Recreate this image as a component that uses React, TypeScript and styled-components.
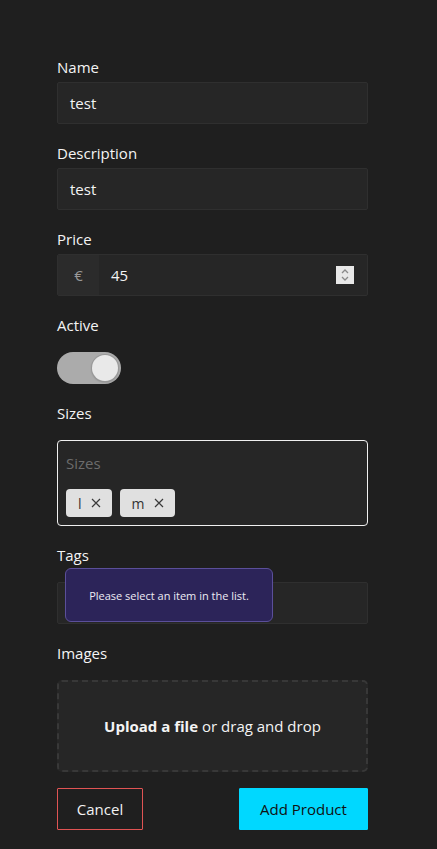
import React from "react";
import styled, { createGlobalStyle } from "styled-components";

const Global = createGlobalStyle`
  html, body { margin: 0; padding: 0; background: #1f1f1f; }
  body { font-family: "Open Sans", "Noto Sans", sans-serif; color: #f2f2f2; }
  * { box-sizing: border-box; }
`;

const Page = styled.div`
  min-height: 849px;
  padding: 56px 69px 19px 57px;
  display: flex;
  flex-direction: column;
  gap: 18px;
`;

const Field = styled.div`
  position: relative;
  display: flex;
  flex-direction: column;
`;

const Label = styled.label<{ $gap: number }>`
  font-size: 15px;
  line-height: 22px;
  color: #f4f4f4;
  margin-bottom: ${(p) => p.$gap}px;
`;

const TextBox = styled.div`
  height: 42px;
  background: #262626;
  border: 1px solid #2f2f2f;
  border-radius: 2px;
  display: flex;
  align-items: center;
  font-size: 15px;
  color: #f4f4f4;
  overflow: hidden;
`;

const Value = styled.span`
  flex: 1;
  padding-left: 12px;
`;

const Prefix = styled.span`
  width: 41px;
  align-self: stretch;
  display: flex;
  align-items: center;
  justify-content: center;
  background: #2b2b2b;
  color: #9a9a9a;
  font-size: 15px;
`;

const Spinner = styled.span`
  width: 18px;
  height: 18px;
  margin-right: 13px;
  background: #e8e8e8;
  display: flex;
  align-items: center;
  justify-content: center;
`;

const Toggle = styled.div`
  width: 64px;
  height: 32px;
  border-radius: 16px;
  background: #ababab;
  display: flex;
  align-items: center;
  justify-content: flex-end;
  padding-right: 3px;
`;

const Knob = styled.span`
  width: 26px;
  height: 26px;
  border-radius: 50%;
  background: #e9e9e9;
  box-shadow: 0 0 0 1px #999, 0 1px 2px rgba(0, 0, 0, 0.3);
`;

const MultiBox = styled.div`
  height: 86px;
  border: 1px solid #f0f0f0;
  border-radius: 4px;
  background: #262626;
  padding: 10px 8px 8px;
  display: flex;
  flex-direction: column;
  gap: 14px;
`;

const Placeholder = styled.span`
  font-size: 15px;
  line-height: 24px;
  color: #6c6c6c;
`;

const Chips = styled.div`
  display: flex;
  gap: 8px;
`;

const Chip = styled.span`
  height: 28px;
  padding: 0 11px 0 12px;
  display: flex;
  align-items: center;
  gap: 9px;
  background: #e0e0e0;
  border-radius: 4px;
  color: #333;
  font-size: 14px;
`;

const Tooltip = styled.div`
  position: absolute;
  left: 8px;
  top: 24px;
  width: 208px;
  height: 54px;
  border-radius: 6px;
  background: #2c2459;
  border: 1px solid #5b4f9a;
  display: flex;
  align-items: center;
  justify-content: center;
  font-size: 11px;
  color: #ececf4;
`;

const Drop = styled.div`
  height: 92px;
  border: 2px dashed #383838;
  border-radius: 5px;
  background: #262626;
  display: flex;
  align-items: center;
  justify-content: center;
  font-size: 15px;
  color: #f4f4f4;
`;

const Strong = styled.strong`
  font-weight: 700;
  margin-right: 4px;
`;

const Actions = styled.div`
  display: flex;
  justify-content: space-between;
  margin-top: -2px;
`;

const Button = styled.button<{ $primary?: boolean }>`
  height: 42px;
  padding: 0;
  font-family: inherit;
  font-size: 15px;
  border-radius: 1px;
  border: 1px solid ${(p) => (p.$primary ? "#00d8ff" : "#e05454")};
  background: ${(p) => (p.$primary ? "#00d8ff" : "transparent")};
  color: ${(p) => (p.$primary ? "#111" : "#f2f2f2")};
  width: ${(p) => (p.$primary ? 129 : 86)}px;
`;

const X = () => (
  <svg width="10" height="10" viewBox="0 0 10 10">
    <path d="M1 1 L9 9 M9 1 L1 9" stroke="#3a3a3a" strokeWidth="1.2" />
  </svg>
);

export default function App() {
  return (
    <>
      <Global />
      <Page>
        <Field>
          <Label $gap={4}>Name</Label>
          <TextBox>
            <Value>test</Value>
          </TextBox>
        </Field>
        <Field>
          <Label $gap={4}>Description</Label>
          <TextBox>
            <Value>test</Value>
          </TextBox>
        </Field>
        <Field>
          <Label $gap={4}>Price</Label>
          <TextBox>
            <Prefix>€</Prefix>
            <Value>45</Value>
            <Spinner>
              <svg width="10" height="14" viewBox="0 0 10 14">
                <path d="M2 5 L5 2 L8 5 M2 9 L5 12 L8 9" stroke="#8a8a8a" strokeWidth="1.3" fill="none" />
              </svg>
            </Spinner>
          </TextBox>
        </Field>
        <Field>
          <Label $gap={16}>Active</Label>
          <Toggle>
            <Knob />
          </Toggle>
        </Field>
        <Field>
          <Label $gap={16}>Sizes</Label>
          <MultiBox>
            <Placeholder>Sizes</Placeholder>
            <Chips>
              <Chip>
                l <X />
              </Chip>
              <Chip>
                m <X />
              </Chip>
            </Chips>
          </MultiBox>
        </Field>
        <Field>
          <Label $gap={16}>Tags</Label>
          <TextBox />
          <Tooltip>Please select an item in the list.</Tooltip>
        </Field>
        <Field>
          <Label $gap={16}>Images</Label>
          <Drop>
            <Strong>Upload a file</Strong> or drag and drop
          </Drop>
        </Field>
        <Actions>
          <Button>Cancel</Button>
          <Button $primary>Add Product</Button>
        </Actions>
      </Page>
    </>
  );
}
